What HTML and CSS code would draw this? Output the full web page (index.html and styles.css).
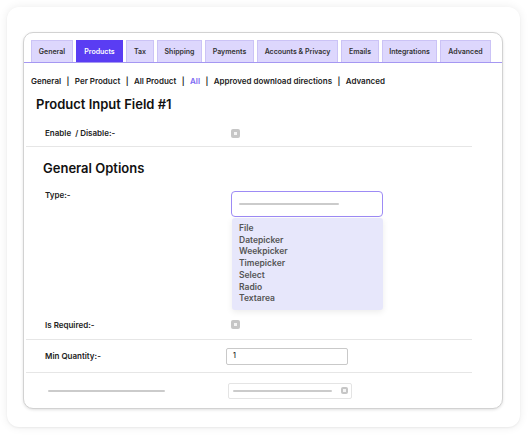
FILE: index.html
```html
<!DOCTYPE html>
<html>
<head>
<meta charset="utf-8">
<link rel="stylesheet" href="styles.css">
</head>
<body>
<div class="card">
  <div class="panel">
    <div class="tabs">
      <div class="tab w-general">General</div>
      <div class="tab active w-products">Products</div>
      <div class="tab w-tax">Tax</div>
      <div class="tab w-shipping">Shipping</div>
      <div class="tab w-payments">Payments</div>
      <div class="tab w-accounts">Accounts &amp; Privacy</div>
      <div class="tab w-emails">Emails</div>
      <div class="tab w-integrations">Integrations</div>
      <div class="tab w-advanced">Advanced</div>
    </div>
    <div class="sublinks">
      <span>General</span><span class="sep">|</span><span>Per Product</span><span class="sep">|</span><span>All Product</span><span class="sep">|</span><span class="current">All</span><span class="sep">|</span><span>Approved download directions</span><span class="sep">|</span><span>Advanced</span>
    </div>
    <h2 class="title">Product Input Field #1</h2>
    <div class="row row-enable">
      <div class="label">Enable &nbsp;/ Disable:-</div>
      <div class="control"><span class="check"></span></div>
    </div>
    <div class="section">
      <h3 class="subtitle">General Options</h3>
      <div class="row row-type">
        <div class="label">Type:-</div>
        <div class="control">
          <div class="select"><span class="bar bar-select"></span></div>
          <ul class="dropdown">
            <li>File</li>
            <li>Datepicker</li>
            <li>Weekpicker</li>
            <li>Timepicker</li>
            <li>Select</li>
            <li>Radio</li>
            <li>Textarea</li>
          </ul>
        </div>
      </div>
      <div class="row row-required line">
        <div class="label">Is Required:-</div>
        <div class="control"><span class="check"></span></div>
      </div>
      <div class="row row-qty line">
        <div class="label">Min Quantity:-</div>
        <div class="control"><div class="input">1</div></div>
      </div>
      <div class="row row-last">
        <div class="label"><span class="bar bar-label"></span></div>
        <div class="control"><div class="box"><span class="bar bar-box"></span><span class="check small"></span></div></div>
      </div>
    </div>
  </div>
</div>
</body>
</html>
```

FILE: styles.css
```css
* { box-sizing: border-box; }
html, body { margin: 0; padding: 0; background: #ffffff; }
body {
  font-family: "Inter", "Liberation Sans", sans-serif;
  color: #222;
  width: 530px;
  height: 437px;
  overflow: hidden;
}
.card {
  margin: 7px 0 0 7px;
  width: 513px;
  height: 420px;
  background: #fff;
  border-radius: 12px;
  box-shadow: 0 0 10px rgba(0,0,0,0.08), 0 1px 2px rgba(0,0,0,0.05);
  padding: 25px 0 0 16px;
}
.panel {
  width: 480px;
  height: 377px;
  border: 1px solid #d2d2d2;
  border-radius: 10px;
  box-shadow: 0 1px 3px rgba(0,0,0,0.12);
  background: #fff;
  padding-top: 7px;
}
.tabs {
  display: flex;
  gap: 3px;
  padding-left: 7px;
  border-bottom: 1px solid #a597f2;
}
.tab {
  height: 22px;
  display: flex;
  align-items: center;
  justify-content: center;
  background: #ddd7fd;
  border: 1px solid #cbc3f6;
  border-bottom: none;
  font-size: 7px;
  font-weight: 600;
  color: #333;
}
.tab.active { background: #5a3df3; border-color: #5a3df3; color: #fff; }
.w-general { width: 42px; }
.w-products { width: 47px; }
.w-tax { width: 28px; }
.w-shipping { width: 45px; }
.w-payments { width: 49px; }
.w-accounts { width: 81px; }
.w-emails { width: 38px; }
.w-integrations { width: 55px; }
.w-advanced { width: 51px; }

.sublinks {
  margin: 13px 0 0 7px;
  font-size: 8px;
  line-height: 10px;
  font-weight: 600;
  color: #222;
  display: flex;
}
.sublinks .sep { margin: 0 5.4px; }
.sublinks .current { color: #7b6af2; }

.title {
  margin: 9px 0 0 12px;
  font-size: 13px;
  line-height: 18px;
  font-weight: 600;
  color: #111;
}
.row {
  display: grid;
  grid-template-columns: 181px 1fr;
  align-items: center;
  margin-left: 2px;
  width: 446px;
  padding-left: 19px;
  font-size: 8px;
  font-weight: 600;
  line-height: 10px;
}
.row-enable { height: 34px; padding-top: 7px; border-bottom: 1px solid #e6e6e6; }
.subtitle {
  margin: 12px 0 0 19px;
  font-size: 13px;
  line-height: 18px;
  font-weight: 600;
  color: #111;
}
.row-type { align-items: start; margin-top: 13px; }
.row-required { height: 30px; border-bottom: 1px solid #e6e6e6; }
.row-qty { height: 33px; border-bottom: 1px solid #e6e6e6; }
.row-last { height: 35px; }
.control { display: flex; flex-direction: column; align-items: flex-start; }
.check {
  display: block;
  width: 9px;
  height: 9px;
  margin-left: 5px;
  border-radius: 2px;
  background: #c6c6c6;
  position: relative;
}
.check::after {
  content: "";
  position: absolute;
  left: 3px; top: 3px;
  width: 3px; height: 3px;
  background: #f4f4f4;
}
.check.small { margin-left: 0; width: 7px; height: 7px; }
.check.small::after { left: 2px; top: 2px; }
.select {
  margin: 1px 0 0 5px;
  width: 152px;
  height: 26px;
  border: 1.5px solid #9d8bf5;
  border-radius: 4px;
  display: flex;
  align-items: center;
  padding-left: 7px;
}
.bar { display: block; height: 2px; background: #cbcbcb; border-radius: 1px; }
.bar-select { width: 100px; }
.dropdown {
  list-style: none;
  margin: 1px 0 0 6px;
  padding: 5px 0 0 7px;
  width: 151px;
  height: 92px;
  background: #e7e7fb;
  border-radius: 3px;
  box-shadow: 0 2px 6px rgba(0,0,0,0.08);
  font-size: 8.5px;
  line-height: 11.7px;
  color: #555;
}
.input {
  width: 122px;
  height: 17px;
  border: 1px solid #c9c9c9;
  border-radius: 2px;
  padding-left: 6px;
  display: flex;
  align-items: center;
  font-weight: 500;
  font-size: 7px;
}
.bar-label { width: 117px; margin-left: 3px; }
.box {
  margin-left: 2px;
  width: 124px;
  height: 16px;
  border: 1px solid #e4e4e4;
  border-radius: 2px;
  display: flex;
  align-items: center;
  padding-left: 4px;
  gap: 9px;
}
.bar-box { width: 99px; }
```
